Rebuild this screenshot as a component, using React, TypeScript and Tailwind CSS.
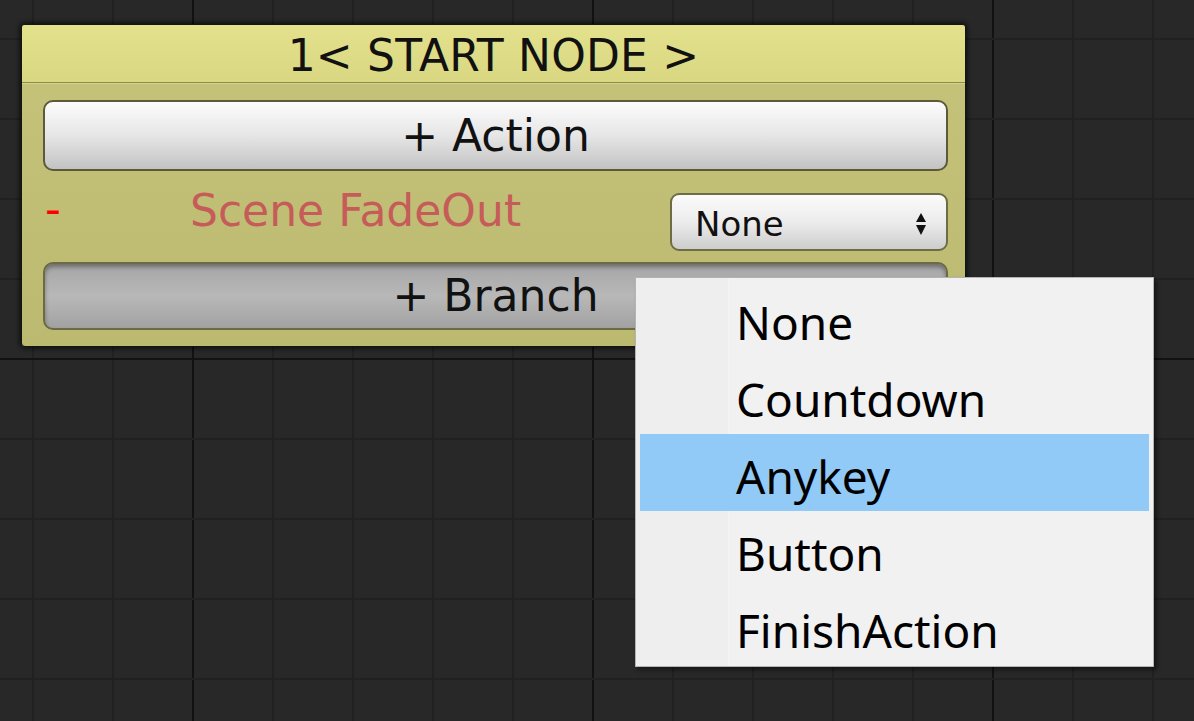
import React from "react";

const COLS = Array.from({ length: 15 }, (_, i) => 33 + i * 80);
const ROWS = Array.from({ length: 9 }, (_, i) => 39 + i * 80);
const OPTIONS = ["None", "Countdown", "Anykey", "Button", "FinishAction"];

function GridBackground() {
  return (
    <svg className="absolute inset-0" width="1194" height="721" aria-hidden>
      {COLS.map((x) => (
        <line
          key={`v${x}`}
          x1={x}
          x2={x}
          y1={0}
          y2={721}
          stroke={(x - 193) % 400 === 0 ? "#121212" : "#212121"}
          strokeWidth={2}
        />
      ))}
      {ROWS.map((y) => (
        <line
          key={`h${y}`}
          x1={0}
          x2={1194}
          y1={y}
          y2={y}
          stroke={y === 359 ? "#121212" : "#212121"}
          strokeWidth={2}
        />
      ))}
    </svg>
  );
}

function UpDownArrows() {
  return (
    <svg width="10" height="22" viewBox="0 0 10 22" aria-hidden>
      <path d="M5 0 L10 9 L0 9 Z" fill="#111" />
      <path d="M0 12 L10 12 L5 22 Z" fill="#111" />
    </svg>
  );
}

function StartNode() {
  return (
    <div className="absolute left-[21px] top-[24px] w-[945px] h-[323px] rounded-[4px] border border-[#15150f] shadow-[0_0_4px_2px_rgba(0,0,0,0.55)] overflow-hidden flex flex-col bg-gradient-to-b from-[#c6c47b] to-[#bcba70] font-['DejaVu_Sans',sans-serif] text-[#111]">
      <div className="h-[58px] shrink-0 pt-[4px] leading-[53px] text-[44px] tracking-[0.2px] text-center bg-gradient-to-b from-[#e3e18c] to-[#d9d781] border-b border-[#8c8a52] shadow-[0_1px_0_#d6d488]">
        1&lt; START NODE &gt;
      </div>

      <div className="flex flex-col pl-[21px] pr-[17px] pt-[17px]">
        <button
          type="button"
          className="h-[71px] rounded-[10px] border-2 border-[#5c5a3a] bg-gradient-to-b from-[#fcfcfc] via-[#e6e6e6] to-[#c3c3c3] text-[44px] leading-[44px] text-[#111] flex items-center justify-center"
        >
          + Action
        </button>

        <div className="h-[91px] flex items-start">
          <span className="w-[147px] pl-[2px] mt-[16px] text-[44px] leading-[44px] text-[#ff0000]">-</span>
          <span className="flex-1 mt-[18px] text-[44px] leading-[44px] text-[#c65c5a]">Scene FadeOut</span>
          <div className="mt-[22px] w-[278px] h-[58px] rounded-[9px] border-2 border-[#6e6c45] bg-gradient-to-b from-[#fbfbfb] via-[#ececec] to-[#cdcdcd] flex items-center justify-between pl-[23px] pr-[20px] pt-[3px]">
            <span className="text-[34px] leading-[34px] text-[#111]">None</span>
            <UpDownArrows />
          </div>
        </div>

        <button
          type="button"
          className="h-[68px] rounded-[10px] border-2 border-[#6c6a43] bg-gradient-to-b from-[#a6a6a6] via-[#b8b8b8] to-[#a2a2a2] shadow-[inset_0_3px_4px_rgba(0,0,0,0.35)] text-[44px] leading-[44px] text-[#111] flex items-center justify-center"
        >
          + Branch
        </button>
      </div>
    </div>
  );
}

function OptionsMenu() {
  return (
    <div className="absolute left-[635px] top-[277px] w-[519px] h-[390px] border border-[#b4b4b4] bg-[#f1f1f1] shadow-[3px_3px_4px_rgba(0,0,0,0.45)] pt-[2px] font-['Noto_Sans',sans-serif]">
      <div className="absolute left-0 top-0 bottom-0 w-[93px] bg-[#eeeeee] border-r border-[#f4f4f4]" />
      <ul className="relative">
        {OPTIONS.map((opt) => (
          <li
            key={opt}
            className={
              opt === "Anykey"
                ? "h-[77px] mx-[4px] pl-[96px] text-[46px] leading-[84px] text-black bg-[#91c9f7]"
                : "h-[77px] mx-[4px] pl-[96px] text-[46px] leading-[84px] text-black"
            }
          >
            {opt}
          </li>
        ))}
      </ul>
    </div>
  );
}

export default function App() {
  return (
    <div className="relative w-full h-[721px] overflow-hidden bg-[#282828]">
      <GridBackground />
      <StartNode />
      <OptionsMenu />
    </div>
  );
}
